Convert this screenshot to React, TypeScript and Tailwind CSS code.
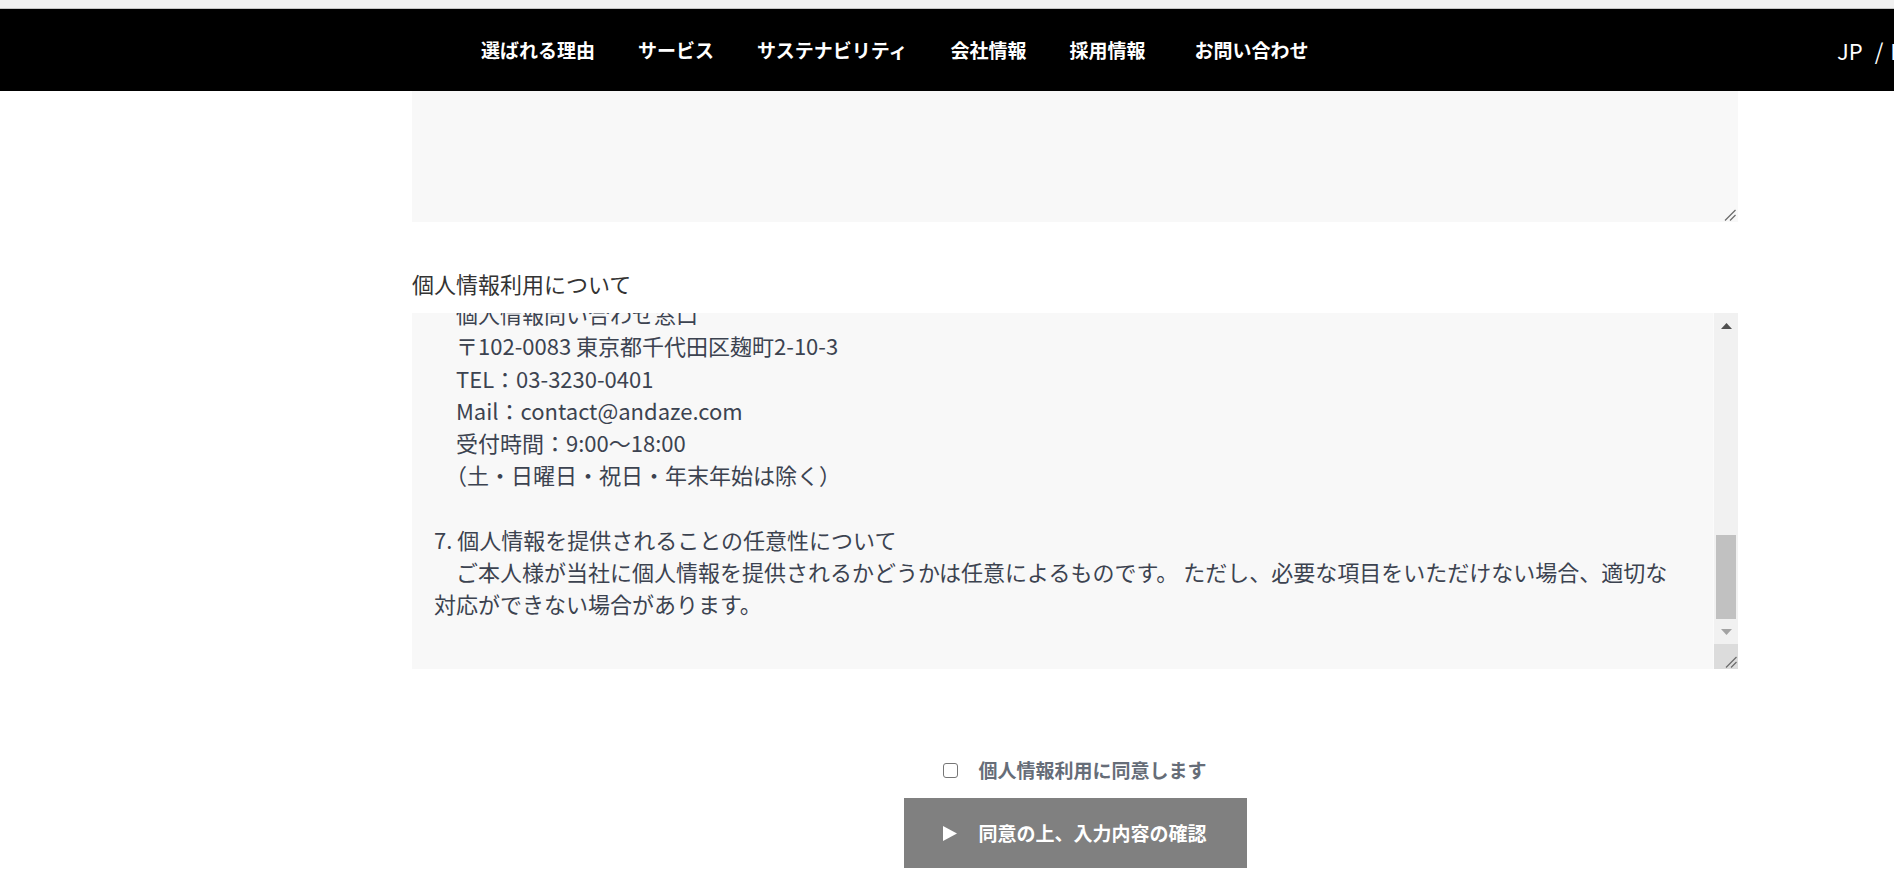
import { useState } from "react";

const navItems = ["選ばれる理由", "サービス", "サステナビリティ", "会社情報", "採用情報", "お問い合わせ"];

const policyLines = [
  "　個人情報問い合わせ窓口",
  "　〒102-0083 東京都千代田区麹町2-10-3",
  "　TEL：03-3230-0401",
  "　Mail：contact@andaze.com",
  "　受付時間：9:00～18:00",
  "　（土・日曜日・祝日・年末年始は除く）",
  "",
  "7. 個人情報を提供されることの任意性について",
  "　ご本人様が当社に個人情報を提供されるかどうかは任意によるものです。 ただし、必要な項目をいただけない場合、適切な",
  "対応ができない場合があります。",
];

const Grip = () => (
  <svg width="12" height="12" viewBox="0 0 12 12" className="block">
    <line x1="1" y1="11.5" x2="11.5" y2="1" stroke="#6b6b6b" strokeWidth="1.3" />
    <line x1="6" y1="11.5" x2="11.5" y2="6" stroke="#6b6b6b" strokeWidth="1.3" />
  </svg>
);

const App = () => {
  const [agreed, setAgreed] = useState(false);

  return (
    <div
      className="w-full h-[890px] overflow-hidden bg-white"
      style={{ fontFamily: '"Noto Sans CJK JP", "Noto Sans", sans-serif' }}
    >
      <div className="h-[9px] bg-[#f1f1f1] border-b border-[#c4c4c4]" />

      <header className="h-[82px] bg-black flex items-center overflow-hidden">
        <nav className="ml-[481px] flex items-center gap-[43px] text-[19px] font-bold text-white">
          {navItems.map((item, i) => (
            <a key={item} href="#" className={i === navItems.length - 1 ? "ml-[6px]" : ""}>
              {item}
            </a>
          ))}
        </nav>
        <div className="ml-auto mr-[-50px] w-[107px] shrink-0 flex items-center whitespace-nowrap text-[22px] text-white">
          <span>JP</span>
          <span className="ml-[12px]">/</span>
          <span className="ml-[7px]">EN</span>
        </div>
      </header>

      <main className="ml-[412px] w-[1326px]">
        <div className="h-[131px] bg-[#f8f8f8] flex items-end justify-end pr-[2px] pb-[1px]">
          <Grip />
        </div>

        <label className="block mt-[45px] text-[22px] leading-[32px] text-[#333]">
          個人情報利用について
        </label>

        <div className="mt-[14px] h-[356px] flex bg-[#f8f8f8]">
          <div className="flex-1 overflow-hidden pl-[22px]">
            <div className="-mt-[16px] text-[22px] leading-[32.25px] text-[#3c4350] whitespace-pre">
              {policyLines.map((line, i) => (
                <div key={i} className="h-[32.25px]">
                  {line}
                </div>
              ))}
            </div>
          </div>

          <div className="w-[25px] flex flex-col bg-[#f1f1f1] border-l border-[#fbfbfb]">
            <div className="h-[25px] flex items-center justify-center">
              <svg width="11" height="6" viewBox="0 0 11 6">
                <polygon points="5.5,0 11,6 0,6" fill="#505050" />
              </svg>
            </div>
            <div className="flex-1 flex flex-col justify-end px-[2px]">
              <div className="h-[84px] bg-[#c1c1c1]" />
            </div>
            <div className="h-[25px] flex items-center justify-center">
              <svg width="11" height="6" viewBox="0 0 11 6">
                <polygon points="0,0 11,0 5.5,6" fill="#a3a3a3" />
              </svg>
            </div>
            <div className="h-[25px] bg-[#dcdcdc] flex items-end justify-end pr-[1px] pb-[1px]">
              <Grip />
            </div>
          </div>
        </div>

        <div className="mt-[85px] h-[32px] flex items-center justify-center gap-[20px]">
          <input
            type="checkbox"
            checked={agreed}
            onChange={(e) => setAgreed(e.target.checked)}
            className="appearance-none w-[15px] h-[15px] border border-[#767676] rounded-[3px] bg-white"
          />
          <span className="text-[19px] font-bold text-[#666d78]">個人情報利用に同意します</span>
        </div>

        <div className="mt-[12px] flex justify-center">
          <button
            type="button"
            className="w-[343px] h-[70px] bg-[#808080] text-white flex items-center justify-center gap-[21px]"
          >
            <svg width="14" height="15" viewBox="0 0 14 15">
              <polygon points="0,0 14,7.5 0,15" fill="#ffffff" />
            </svg>
            <span className="text-[19px] font-bold">同意の上、入力内容の確認</span>
          </button>
        </div>
      </main>
    </div>
  );
};

export default App;
